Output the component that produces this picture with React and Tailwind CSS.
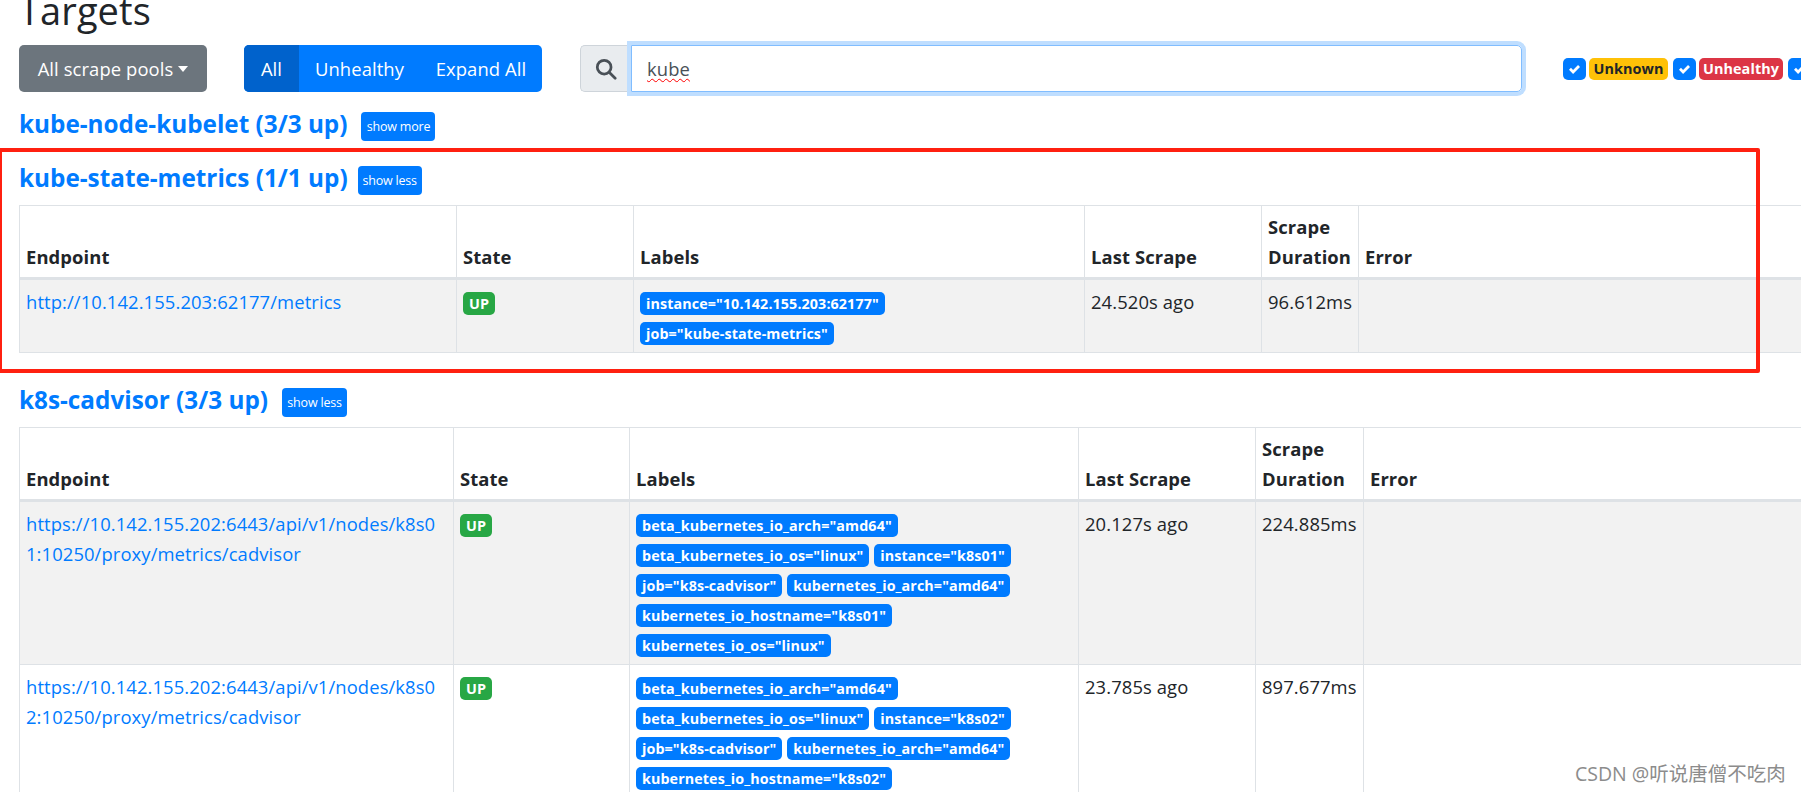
const LINK = 'text-[#007bff]'

const stateMetrics = [
  {
    endpoint: 'http://10.142.155.203:62177/metrics',
    labels: ['instance="10.142.155.203:62177"', 'job="kube-state-metrics"'],
    lastScrape: '24.520s ago',
    duration: '96.612ms',
  },
]

const cadvisorLabels = (node) => [
  'beta_kubernetes_io_arch="amd64"',
  'beta_kubernetes_io_os="linux"',
  `instance="${node}"`,
  'job="k8s-cadvisor"',
  'kubernetes_io_arch="amd64"',
  `kubernetes_io_hostname="${node}"`,
  'kubernetes_io_os="linux"',
]

const cadvisor = [
  {
    endpoint: 'https://10.142.155.202:6443/api/v1/nodes/k8s01:10250/proxy/metrics/cadvisor',
    labels: cadvisorLabels('k8s01'),
    lastScrape: '20.127s ago',
    duration: '224.885ms',
  },
  {
    endpoint: 'https://10.142.155.202:6443/api/v1/nodes/k8s02:10250/proxy/metrics/cadvisor',
    labels: cadvisorLabels('k8s02'),
    lastScrape: '23.785s ago',
    duration: '897.677ms',
  },
]

function Check() {
  return (
    <span className="flex h-[22px] w-[23px] shrink-0 items-center justify-center rounded-[5px] bg-[#007bff]">
      <svg viewBox="0 0 8 8" className="h-[11px] w-[11px]">
        <path fill="#fff" d="M6.564.75l-3.59 3.612-1.538-1.55L0 4.26 2.974 7.25 8 2.193z" />
      </svg>
    </span>
  )
}

function Filter({ name, className }) {
  return (
    <div className="flex shrink-0 items-center gap-[3px]">
      <Check />
      <span className={`flex h-[22px] items-center justify-center rounded-[5px] text-[14.4px] font-bold ${className}`}>{name}</span>
    </div>
  )
}

function PoolHeading({ title, action, buttonClass, className }) {
  return (
    <div className={`flex items-center ${className}`}>
      <a className={`mb-[5px] text-[24.3px] font-bold tracking-[0px] ${LINK}`}>{title}</a>
      <button className={`flex h-[29px] items-center justify-center rounded-[4px] bg-[#007bff] text-[12.5px] tracking-[-0.2px] text-white ${buttonClass}`}>
        {action}
      </button>
    </div>
  )
}

function TargetTable({ rows, widths }) {
  const th = 'border border-b-[3px] border-[#dee2e6] px-[6px] pt-[6px] pb-[5px] text-left align-bottom font-bold'
  const td = 'border border-[#dee2e6] px-[6px] pt-[7px] pb-[5px] align-top'
  return (
    <table className="w-[1850px] table-fixed border-collapse text-[#212529]">
      <thead>
        <tr>
          <th className={`${th} ${widths[0]}`}>Endpoint</th>
          <th className={`${th} ${widths[1]}`}>State</th>
          <th className={`${th} ${widths[2]}`}>Labels</th>
          <th className={`${th} ${widths[3]}`}>Last Scrape</th>
          <th className={`${th} ${widths[4]}`}>Scrape Duration</th>
          <th className={th}>Error</th>
        </tr>
      </thead>
      <tbody>
        {rows.map((row, index) => (
          <tr key={row.endpoint} className={index % 2 === 0 ? 'bg-[#f2f2f2]' : ''}>
            <td className={td}>
              <a className={`break-all ${LINK}`}>{row.endpoint}</a>
            </td>
            <td className={td}>
              <span className="inline-block rounded-[5px] bg-[#28a745] px-[6px] text-[14.4px] leading-[23px] font-bold text-white">UP</span>
            </td>
            <td className={td}>
              {row.labels.map((label) => (
                <span key={label}>
                  <span className="inline-block rounded-[5px] bg-[#007bff] px-[6px] text-[14.3px] leading-[23px] font-bold text-white">{label}</span>{' '}
                </span>
              ))}
            </td>
            <td className={td}>{row.lastScrape}</td>
            <td className={td}>{row.duration}</td>
            <td className={td}></td>
          </tr>
        ))}
      </tbody>
    </table>
  )
}

export default function App() {
  return (
    <div className="relative h-[792px] w-[1801px] overflow-hidden bg-white font-['Open_Sans','Noto_Sans_CJK_SC',sans-serif] text-[18.4px] leading-[30px] tracking-[0.1px]">
      <div className="pl-[19px]">
        <h1 className="mt-[-23px] h-[68px] text-[38px] leading-[66px] font-medium text-[#212529]">Targets</h1>

        <div className="flex h-[47px] items-stretch">
          <button className="flex w-[188px] shrink-0 items-center justify-center gap-[5px] rounded-[5px] bg-[#6c757d] text-white">
            All scrape pools
            <span className="mt-[1px] border-x-[5px] border-t-[6px] border-x-transparent border-t-white"></span>
          </button>
          <div className="ml-[37px] flex w-[298px] shrink-0 overflow-hidden rounded-[5px] bg-[#007bff] text-white">
            <button className="w-[55px] bg-[#0062cc]">All</button>
            <button className="w-[121px]">Unhealthy</button>
            <button className="w-[122px]">Expand All</button>
          </div>
          <div className="ml-[38px] flex w-[942px] shrink-0">
            <span className="flex w-[51px] items-center justify-center rounded-l-[5px] border border-r-0 border-[#ced4da] bg-[#e9ecef] text-[#495057]">
              <svg viewBox="0 0 24 24" fill="none" stroke="currentColor" strokeWidth="3" strokeLinecap="round" className="h-[22px] w-[22px]">
                <circle cx="10" cy="10" r="7.5" />
                <path d="M16 16l6 6" />
              </svg>
            </span>
            <div className="flex flex-1 items-center rounded-r-[5px] border border-[#80bdff] px-[15px] text-[#495057] shadow-[0_0_0_4px_#bfdeff]">
              <span className="underline decoration-[#f00] decoration-wavy decoration-1 underline-offset-2">kube</span>
            </div>
          </div>
          <div className="ml-[41px] flex items-center gap-[5px] pt-[1px]">
            <Filter name="Unknown" className="w-[79px] bg-[#ffc107] text-[#212529]" />
            <Filter name="Unhealthy" className="w-[84px] bg-[#dc3545] text-white" />
            <Check />
          </div>
        </div>

        <PoolHeading
          title="kube-node-kubelet (3/3 up)"
          action="show more"
          buttonClass="ml-[14px] w-[74px]"
          className="mt-[20px] h-[29px]"
        />
        <PoolHeading
          title="kube-state-metrics (1/1 up)"
          action="show less"
          buttonClass="ml-[10px] w-[64px]"
          className="mt-[25px] h-[29px]"
        />
        <div className="mt-[10px]">
          <TargetTable rows={stateMetrics} widths={['w-[437px]', 'w-[177px]', 'w-[451px]', 'w-[177px]', 'w-[97px]']} />
        </div>
        <PoolHeading
          title="k8s-cadvisor (3/3 up)"
          action="show less"
          buttonClass="ml-[14px] w-[65px]"
          className="mt-[35px] h-[29px]"
        />
        <div className="mt-[10px]">
          <TargetTable rows={cadvisor} widths={['w-[434px]', 'w-[176px]', 'w-[449px]', 'w-[177px]', 'w-[108px]']} />
        </div>
      </div>

      {/* annotation drawn over the screenshot */}
      <div className="pointer-events-none absolute top-[148px] left-[-2px] h-[225px] w-[1762px] rounded-[2px] border-4 border-[#ff2010]"></div>
      <div className="pointer-events-none absolute top-[759px] left-[1575px] text-[19.5px] tracking-normal text-[#8c8c8c]">
        CSDN @听说唐僧不吃肉
      </div>
    </div>
  )
}
